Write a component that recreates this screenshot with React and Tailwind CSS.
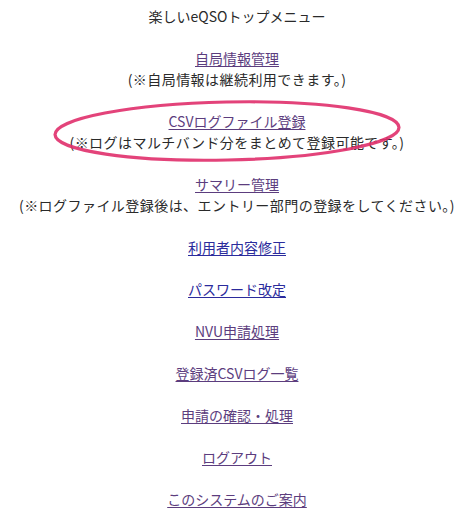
import React from "react";

const menu = [
  { label: "自局情報管理", note: "(※自局情報は継続利用できます。)", visited: true },
  { label: "CSVログファイル登録", note: "(※ログはマルチバンド分をまとめて登録可能です。)", visited: true },
  { label: "サマリー管理", note: "(※ログファイル登録後は、エントリー部門の登録をしてください。)", visited: true },
  { label: "利用者内容修正", visited: false },
  { label: "パスワード改定", visited: false },
  { label: "NVU申請処理", visited: true },
  { label: "登録済CSVログ一覧", visited: true },
  { label: "申請の確認・処理", visited: true },
  { label: "ログアウト", visited: true },
  { label: "このシステムのご案内", visited: true },
];

const App = () => {
  return (
    <div className="relative w-[474px] h-[526px] bg-white overflow-hidden font-['Noto_Sans_CJK_JP',sans-serif] text-[14px] leading-[21px] text-[#2a2a2a] text-center">
      <div className="pt-[6px] flex flex-col items-center">
        <p className="mb-[21px]">楽しいeQSOトップメニュー</p>

        {menu.map((item) => (
          <div key={item.label} className="mb-[21px] flex flex-col items-center">
            <a
              href="#"
              className={
                item.visited
                  ? "text-[#5c3d7e] underline underline-offset-2"
                  : "text-[#2b2b9c] underline underline-offset-2"
              }
            >
              {item.label}
            </a>
            {item.note && <p className="whitespace-nowrap tracking-[0.45px]">{item.note}</p>}
          </div>
        ))}
      </div>

      {/* hand-drawn highlight over the CSV entry */}
      <svg
        className="absolute left-0 top-0 pointer-events-none"
        width="474"
        height="526"
        viewBox="0 0 474 526"
      >
        <ellipse
          cx="227"
          cy="131"
          rx="172"
          ry="29"
          fill="none"
          stroke="#e02f6c"
          strokeWidth="3.2"
          transform="rotate(-1.2 227 131)"
          opacity="0.9"
        />
      </svg>
    </div>
  );
};

export default App;
